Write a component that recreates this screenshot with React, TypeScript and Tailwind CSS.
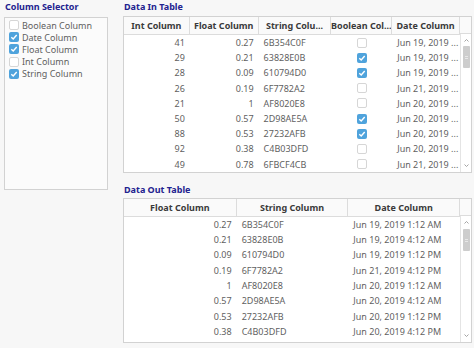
import React from 'react';

const font = { fontFamily: '"Noto Sans", "Open Sans", sans-serif' };

const inRows = [
  { i: '41', f: '0.27', s: '6B354C0F', b: false, d: 'Jun 19, 2019 1:12 AM' },
  { i: '29', f: '0.21', s: '63828E0B', b: true, d: 'Jun 19, 2019 4:12 AM' },
  { i: '28', f: '0.09', s: '610794D0', b: true, d: 'Jun 19, 2019 1:12 PM' },
  { i: '26', f: '0.19', s: '6F7782A2', b: false, d: 'Jun 21, 2019 4:12 PM' },
  { i: '21', f: '1', s: 'AF8020E8', b: false, d: 'Jun 20, 2019 1:12 AM' },
  { i: '50', f: '0.57', s: '2D98AE5A', b: true, d: 'Jun 20, 2019 4:12 AM' },
  { i: '88', f: '0.53', s: '27232AFB', b: true, d: 'Jun 20, 2019 1:12 PM' },
  { i: '92', f: '0.38', s: 'C4B03DFD', b: false, d: 'Jun 20, 2019 4:12 PM' },
  { i: '49', f: '0.78', s: '6FBCF4CB', b: false, d: 'Jun 21, 2019 1:12 AM' },
];

function Check({ on }: { on: boolean }) {
  return on ? (
    <span className="w-[10px] h-[10px] rounded-[2px] bg-[#4fa3dc] flex items-center justify-center shrink-0">
      <svg width="8" height="8" viewBox="0 0 8 8">
        <path d="M1.3 4.2 L3.2 6 L6.7 2" stroke="#fff" strokeWidth="1.4" fill="none" />
      </svg>
    </span>
  ) : (
    <span className="w-[10px] h-[10px] rounded-[2px] border border-[#d6d6d6] bg-white shrink-0" />
  );
}

function ScrollBar({ thumbTop }: { thumbTop: number }) {
  return (
    <div className="w-[11px] border-l border-[#e4e4e4] bg-white flex flex-col items-center">
      <svg width="7" height="7" viewBox="0 0 7 7" className="mt-[3px]">
        <path d="M1.5 4.5 L3.5 2.5 L5.5 4.5" stroke="#9a9a9a" strokeWidth="0.9" fill="none" />
      </svg>
      <div className="w-[7px] h-[22px] bg-[#cdcdcd] rounded-[1px] flex flex-col items-center justify-center gap-[1px]" style={{ marginTop: thumbTop }}>
        <div className="w-[3px] h-[1px] bg-[#e8e8e8]" />
        <div className="w-[3px] h-[1px] bg-[#e8e8e8]" />
      </div>
      <div className="flex-1" />
      <svg width="7" height="7" viewBox="0 0 7 7" className="mb-[3px]">
        <path d="M1.5 2.5 L3.5 4.5 L5.5 2.5" stroke="#9a9a9a" strokeWidth="0.9" fill="none" />
      </svg>
    </div>
  );
}

const title = 'text-[9px] font-bold text-[#22228f] leading-none';
const head = 'h-[17px] flex items-center justify-center border-r border-[#dcdcdc] text-[9px] font-bold text-[#3a3a3a] truncate px-1';

export default function App() {
  return (
    <div className="w-[474px] h-[348px] bg-[#f7f7f7] flex text-[#5f5f5f] overflow-hidden" style={font}>
      {/* Column Selector */}
      <div className="w-[104px] ml-[4px] pt-[2px] flex flex-col">
        <div className={title + ' ml-[1px] h-[11px]'}>Column Selector</div>
        <div className="mt-[4px] h-[173px] border border-[#d2d2d2] bg-[#fbfbfb] pt-[1px] pl-[4px] flex flex-col">
          {[
            ['Boolean Column', false],
            ['Date Column', true],
            ['Float Column', true],
            ['Int Column', false],
            ['String Column', true],
          ].map(([l, on]) => (
            <div key={l as string} className="h-[12.2px] flex items-center gap-[3px] text-[9px]">
              <Check on={on as boolean} />
              <span className="leading-none">{l}</span>
            </div>
          ))}
        </div>
      </div>

      {/* Right side */}
      <div className="ml-[15px] w-[349px] pt-[2px] flex flex-col">
        <div className={title + ' ml-[1px] h-[11px]'}>Data In Table</div>
        <div className="mt-[3px] h-[157px] border border-[#d2d2d2] bg-white flex">
          <div className="flex-1 flex flex-col min-w-0">
            <div className="flex border-b border-[#dcdcdc] bg-[#fafafa]">
              <div className={head + ' w-[66px]'}>Int Column</div>
              <div className={head + ' w-[69px]'}>Float Column</div>
              <div className={head + ' w-[73px]'}>String Colu...</div>
              <div className={head + ' w-[61px]'}>Boolean Col...</div>
              <div className={head + ' w-[68px]'}>Date Column</div>
            </div>
            {inRows.map((r) => (
              <div key={r.s} className="h-[15.3px] flex items-center text-[9px]">
                <div className="w-[66px] text-right pr-[5px]">{r.i}</div>
                <div className="w-[69px] text-right pr-[5px]">{r.f}</div>
                <div className="w-[73px] pl-[5px] truncate">{r.s}</div>
                <div className="w-[61px] flex justify-center"><Check on={r.b} /></div>
                <div className="w-[68px] pl-[5px] truncate">{r.d.slice(0, 12)} ...</div>
              </div>
            ))}
          </div>
          <div className="flex flex-col">
            <div className="h-[17px] w-[11px] border-b border-[#dcdcdc] bg-[#fafafa]" />
            <div className="flex-1 flex"><ScrollBar thumbTop={2} /></div>
          </div>
        </div>

        <div className={title + ' ml-[1px] mt-[12px] h-[11px]'}>Data Out Table</div>
        <div className="mt-[2px] h-[145px] border border-[#d2d2d2] bg-white flex">
          <div className="flex-1 flex flex-col min-w-0">
            <div className="flex border-b border-[#dcdcdc] bg-[#fafafa]">
              <div className={head + ' w-[113px]'}>Float Column</div>
              <div className={head + ' w-[112px]'}>String Column</div>
              <div className={head + ' w-[112px]'}>Date Column</div>
            </div>
            {inRows.slice(0, 8).map((r) => (
              <div key={r.s} className="h-[15.3px] flex items-center text-[9px]">
                <div className="w-[113px] text-right pr-[5px]">{r.f}</div>
                <div className="w-[112px] pl-[5px] truncate">{r.s}</div>
                <div className="w-[112px] pl-[5px] truncate">{r.d}</div>
              </div>
            ))}
          </div>
          <div className="flex flex-col">
            <div className="h-[17px] w-[11px] border-b border-[#dcdcdc] bg-[#fafafa]" />
            <div className="flex-1 flex"><ScrollBar thumbTop={3} /></div>
          </div>
        </div>
      </div>
    </div>
  );
}
